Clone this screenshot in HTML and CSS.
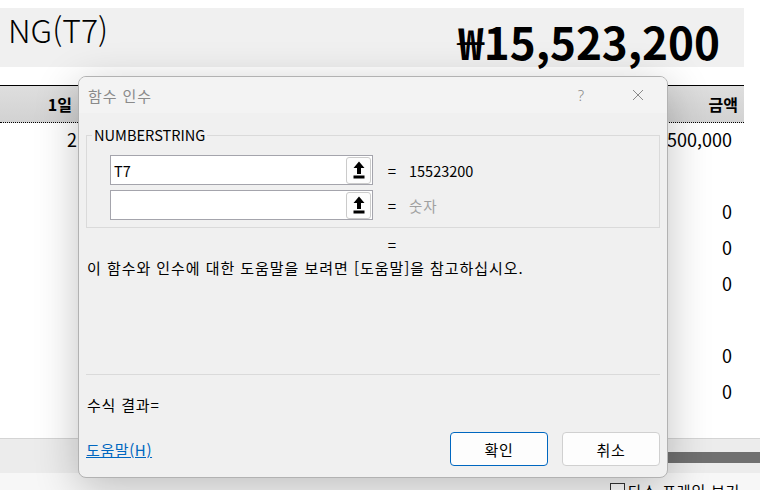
FILE: index.html
```html
<!DOCTYPE html>
<html lang="ko">

<head>
    <meta charset="UTF-8">
    <title>함수 인수</title>
    <link rel="stylesheet" href="styles.css">
</head>

<body>
    <div class="sheet">
        <div class="formula-bar">
            <span class="formula">NG(T7)</span>
            <span class="total">₩15,523,200</span>
        </div>

        <div class="grid">
            <div class="cell head first">1일</div>
            <div class="cell head"></div>
            <div class="cell head last">금액</div>

            <div class="cell first">2</div><div class="cell"></div><div class="cell last">1,500,000</div>
            <div class="cell first"></div><div class="cell"></div><div class="cell last"></div>
            <div class="cell first"></div><div class="cell"></div><div class="cell last">0</div>
            <div class="cell first"></div><div class="cell"></div><div class="cell last">0</div>
            <div class="cell first"></div><div class="cell"></div><div class="cell last">0</div>
            <div class="cell first"></div><div class="cell"></div><div class="cell last"></div>
            <div class="cell first"></div><div class="cell"></div><div class="cell last">0</div>
            <div class="cell first"></div><div class="cell"></div><div class="cell last">0</div>
        </div>

        <div class="statusbar">
            <div class="tabs"></div>
            <div class="scroll"><div class="thumb"></div></div>
            <div class="tabs"></div>
            <div class="options">
                <label class="check"><span class="box"></span>다스 프레임 보기</label>
            </div>
        </div>
    </div>

    <div class="dialog">
        <div class="titlebar">
            <span class="title">함수 인수</span>
            <span class="help-btn">?</span>
            <span class="close-btn">
                <svg width="12" height="12" viewBox="0 0 12 12">
                    <path d="M1 1 L11 11 M11 1 L1 11" stroke="#8a8a8a" stroke-width="1" fill="none"/>
                </svg>
            </span>
        </div>

        <div class="content">
            <fieldset class="args">
                <legend>NUMBERSTRING</legend>
                <div class="arg">
                    <div class="ref">
                        <span class="ref-text">T7</span>
                        <button class="pick" type="button">
                            <svg width="12" height="18" viewBox="0 0 12 18">
                                <path d="M6 0.5 L11.5 7 L8 7 L8 13 L4 13 L4 7 L0.5 7 Z" fill="#000"/>
                                <rect x="0.5" y="14.5" width="11" height="3" fill="#000"/>
                            </svg>
                        </button>
                    </div>
                    <span class="eq">=</span>
                    <span class="value">15523200</span>
                </div>
                <div class="arg">
                    <div class="ref">
                        <span class="ref-text"></span>
                        <button class="pick" type="button">
                            <svg width="12" height="18" viewBox="0 0 12 18">
                                <path d="M6 0.5 L11.5 7 L8 7 L8 13 L4 13 L4 7 L0.5 7 Z" fill="#000"/>
                                <rect x="0.5" y="14.5" width="11" height="3" fill="#000"/>
                            </svg>
                        </button>
                    </div>
                    <span class="eq">=</span>
                    <span class="value hint">숫자</span>
                </div>
            </fieldset>

            <div class="result-line"><span class="eq">=</span></div>
            <p class="desc">이 함수와 인수에 대한 도움말을 보려면 [도움말]을 참고하십시오.</p>

            <div class="sep"></div>

            <p class="formula-result">수식 결과=</p>

            <div class="footer">
                <a class="help-link" href="#">도움말(H)</a>
                <div class="buttons">
                    <button class="btn primary" type="button">확인</button>
                    <button class="btn" type="button">취소</button>
                </div>
            </div>
        </div>
    </div>
</body>

</html>
```

FILE: styles.css
```css
body {
    margin: 0;
    width: 760px;
    height: 490px;
    overflow: hidden;
    background-color: #fff;
    font-family: "Noto Sans CJK KR", "Noto Sans", sans-serif;
    font-size: 15px;
    color: #000;
}

/* sheet behind the dialog */

.sheet {
    padding-top: 8px;
}

.formula-bar {
    width: 744px;
    height: 59px;
    box-sizing: border-box;
    padding: 0 24px 0 8px;
    display: flex;
    align-items: center;
    justify-content: space-between;
    background-color: #f0f0f0;
}

.formula {
    font-size: 32px;
    font-weight: 300;
    margin-top: -17px;
}

.total {
    font-size: 44px;
    font-weight: 700;
    margin-top: 6px;
}

.grid {
    width: 744px;
    margin-top: 18px;
    display: grid;
    grid-template-columns: 78px 1fr 200px;
    grid-auto-rows: 36px;
    height: 353px;
}

.cell {
    display: flex;
    align-items: center;
    justify-content: flex-end;
    font-size: 18px;
    white-space: nowrap;
    overflow: hidden;
}

.cell.first {
    padding-right: 1px;
}

.cell.last {
    padding-right: 12px;
}

.cell.head {
    height: 36px;
    border-top: 1px solid #000;
    border-bottom: 1px dotted #000;
    background: linear-gradient(#dedede, #d2d2d2);
    font-size: 16px;
    font-weight: 700;
}

.cell.head.first {
    padding-right: 6px;
}

.cell.head.last {
    padding-right: 6px;
}

.statusbar {
    height: 52px;
    border-top: 1px solid #d4d4d4;
    background-color: #ececec;
    display: grid;
    grid-template-rows: 13px 11px 10px 1fr;
}

.scroll {
    display: flex;
    justify-content: flex-end;
}

.thumb {
    width: 360px;
    background-color: #707070;
}

.options {
    background-color: #f7f7f7;
    padding-left: 610px;
}

.check {
    display: flex;
    align-items: center;
    gap: 3px;
    padding-top: 7px;
    font-size: 15px;
    white-space: nowrap;
    letter-spacing: 0.8px;
}

.check .box {
    width: 13px;
    height: 13px;
    border: 1px solid #333;
    background-color: #fff;
}

/* function arguments dialog */

.dialog {
    position: absolute;
    left: 78px;
    top: 76px;
    width: 590px;
    height: 402px;
    box-sizing: border-box;
    border: 1px solid #b2b2b2;
    border-radius: 8px;
    background-color: #f0f0f0;
    box-shadow: 0 10px 44px rgba(0, 0, 0, 0.24);
    overflow: hidden;
}

.titlebar {
    height: 36px;
    display: flex;
    align-items: center;
    padding-left: 9px;
    background-color: #f3f3f3;
}

.title {
    flex: 1;
    color: #8a8a8a;
    letter-spacing: 0.9px;
}

.help-btn {
    width: 20px;
    text-align: center;
    color: #8a8a8a;
    font-family: "Noto Sans", sans-serif;
    font-size: 15px;
    font-weight: 300;
    margin-right: 41px;
}

.close-btn {
    width: 12px;
    height: 12px;
    display: flex;
    margin-right: 23px;
}

.content {
    padding: 0 7px;
}

fieldset.args {
    margin: 13px 0 0 0;
    padding: 11px 0 7px 23px;
    border: 1px solid #dadada;
}

fieldset.args legend {
    margin-left: -18px;
    padding: 0 2px;
    line-height: 18px;
    font-size: 14.6px;
}

.arg {
    display: flex;
    align-items: center;
    height: 30px;
}

.arg + .arg {
    margin-top: 5px;
}

.ref {
    width: 263px;
    height: 30px;
    box-sizing: border-box;
    border: 1px solid #a4a4ac;
    background-color: #fff;
    display: flex;
    align-items: center;
    padding: 0 1px 0 3px;
}

.ref-text {
    flex: 1;
    font-size: 14.5px;
}

.pick {
    width: 25px;
    height: 27px;
    padding: 0;
    border: 1px solid #cbcbcb;
    border-radius: 3px;
    background-color: #fdfdfd;
    display: flex;
    align-items: center;
    justify-content: center;
}

.eq {
    width: 24px;
    margin-left: 7px;
    text-align: center;
}

.value {
    margin-left: 5px;
    font-size: 14.5px;
}

.value.hint {
    color: #a0a0a0;
    letter-spacing: 0.8px;
}

.result-line {
    height: 18px;
    line-height: 18px;
    margin-top: 8px;
    padding-left: 294px;
    display: flex;
}

.result-line .eq {
    margin-left: 0;
}

.desc {
    margin: 5px 0 0 1px;
    line-height: 18px;
    letter-spacing: 0.95px;
}

.sep {
    margin-top: 97px;
    height: 1px;
    background-color: #dadada;
}

.formula-result {
    margin: 21px 0 0 1px;
    line-height: 18px;
    letter-spacing: 0.8px;
}

.footer {
    margin-top: 18px;
    display: flex;
    align-items: center;
    justify-content: space-between;
}

.help-link {
    color: #0067c0;
    text-decoration: underline;
    letter-spacing: 0.6px;
}

.buttons {
    display: flex;
    gap: 14px;
}

.btn {
    width: 98px;
    height: 34px;
    border: 1px solid #d0d0d0;
    border-radius: 4px;
    background-color: #fdfdfd;
    font-family: inherit;
    font-size: 15px;
    letter-spacing: 0.8px;
    color: #000;
}

.btn.primary {
    border-color: #0067c0;
}
```
